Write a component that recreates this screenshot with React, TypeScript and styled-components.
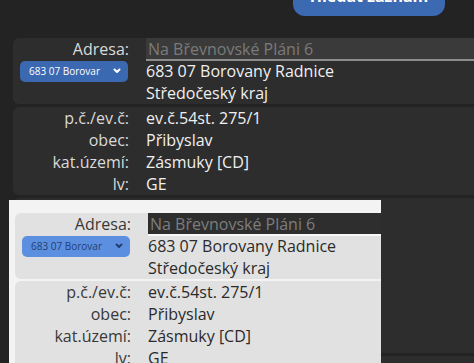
import styled, { createGlobalStyle } from 'styled-components'

const GlobalStyle = createGlobalStyle`
  html, body {
    margin: 0;
    padding: 0;
    background: #232323;
  }
  body {
    font-family: 'Open Sans', 'Noto Sans', sans-serif;
  }
`

const Page = styled.div`
  position: relative;
  height: 363px;
  overflow: hidden;
  background: #232323;
`

const Toolbar = styled.div`
  display: flex;
  justify-content: flex-end;
  padding-right: 29px;
`

const SearchButton = styled.button`
  width: 152px;
  height: 40px;
  margin-top: -24px;
  border: none;
  border-radius: 12px;
  background: #3b69b2;
  color: #fff;
  font-family: inherit;
  font-size: 16px;
  font-weight: 700;
`

const List = styled.div`
  display: flex;
  flex-direction: column;
  gap: 3px;
  width: 480px;
  margin: 22px 0 0 13px;
`

const Card = styled.div<{ $light?: boolean }>`
  display: grid;
  grid-template-columns: 116px 1fr;
  column-gap: 17px;
  grid-auto-rows: 22px;
  align-items: center;
  border-radius: 6px 0 0 6px;
  background: ${(p) => (p.$light ? '#e1e1e1' : '#2d2d2d')};
  font-size: 16px;
  line-height: 22px;
`

const Slot = styled.div<{ $h: number }>`
  height: ${(p) => p.$h}px;
  border-radius: 6px 0 0 6px;
  background: #2d2d2d;
`

const Label = styled.div<{ $light?: boolean }>`
  text-align: right;
  color: ${(p) => (p.$light ? '#383838' : '#dadada')};
`

const Value = styled.div<{ $light?: boolean }>`
  white-space: nowrap;
  color: ${(p) => (p.$light ? '#2a2a2a' : '#f0f0f0')};
`

const StreetInput = styled.input<{ $light?: boolean }>`
  align-self: start;
  height: 21px;
  padding: 0 2px;
  border: none;
  border-bottom: 2px solid ${(p) => (p.$light ? '#f7f7f7' : '#8c8c8c')};
  background: ${(p) => (p.$light ? '#2e2e2e' : '#3a3a3a')};
  font-family: inherit;
  font-size: 16px;
  outline: none;
  &::placeholder {
    color: ${(p) => (p.$light ? '#7d7d7d' : '#7a7a7a')};
  }
`

const Select = styled.div<{ $light?: boolean }>`
  display: flex;
  align-items: center;
  justify-content: space-between;
  height: 21px;
  margin: 0 1px 0 7px;
  padding: 0 7px 0 9px;
  border-radius: 5px;
  background: ${(p) => (p.$light ? '#5d8fe0' : '#3a68b1')};
  color: ${(p) => (p.$light ? '#223f72' : '#ffffff')};
  font-size: 10px;
  line-height: 21px;
`

const Ghost = styled.div`
  position: absolute;
  left: 9px;
  top: 200px;
  width: 366px;
  height: 163px;
  padding: 13px 0 0 6px;
  overflow: hidden;
  background: #f3f3f3;
  display: flex;
  flex-direction: column;
  gap: 2px;
`

const Chevron = ({ color }: { color: string }) => (
  <svg width='8' height='6' viewBox='0 0 8 6'>
    <path d='M1.5 1.5 L4 4 L6.5 1.5' fill='none' stroke={color} strokeWidth='2' strokeLinecap='round' strokeLinejoin='round' />
  </svg>
)

const AddressCard = ({ light }: { light?: boolean }) => (
  <Card $light={light}>
    <Label $light={light}>Adresa:</Label>
    <StreetInput $light={light} placeholder='Na Břevnovské Pláni 6' />
    <Select $light={light}>
      683 07 Borovar
      <Chevron color={light ? '#223f72' : '#ffffff'} />
    </Select>
    <Value $light={light}>683 07 Borovany Radnice</Value>
    <div />
    <Value $light={light}>Středočeský kraj</Value>
  </Card>
)

const parcel = [
  ['p.č./ev.č:', 'ev.č.54st. 275/1'],
  ['obec:', 'Přibyslav'],
  ['kat.území:', 'Zásmuky [CD]'],
  ['lv:', 'GE']
]

const ParcelCard = ({ light }: { light?: boolean }) => (
  <Card $light={light}>
    {parcel.map(([k, v]) => (
      <>
        <Label key={k} $light={light}>{k}</Label>
        <Value key={v} $light={light}>{v}</Value>
      </>
    ))}
  </Card>
)

const App = () => {
  return (
    <Page>
      <GlobalStyle />
      <Toolbar>
        <SearchButton>Hledat záznam</SearchButton>
      </Toolbar>
      <List>
        <AddressCard />
        <ParcelCard />
        <Slot $h={155} />
        <Slot $h={60} />
      </List>
      <Ghost>
        <AddressCard light />
        <ParcelCard light />
      </Ghost>
    </Page>
  )
}

export default App
